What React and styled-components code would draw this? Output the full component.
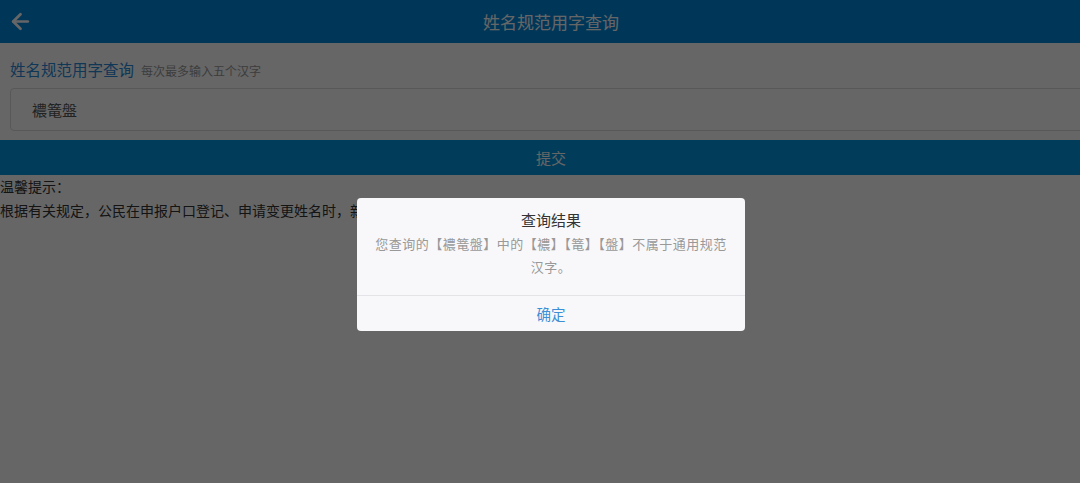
import * as React from "react"
import styled, { createGlobalStyle } from 'styled-components'
import { ArrowLeft } from 'lucide-react'

const GlobalStyle = createGlobalStyle`
html, body{
  margin: 0;
  padding: 0;
  overflow: hidden;
  background: #fff;
}
body{
  font-family: "Noto Sans CJK SC", "Noto Sans", sans-serif;
}
`

// page is a bit wider than the window, as in the screenshot
const Page = styled.div`
position: relative;
width: 1102px;
min-height: 483px;
background-color: #fff;
`

const Header = styled.header`
height: 43px;
display: flex;
align-items: center;
justify-content: center;
position: relative;
background-color: #0089df;
color: #fff;
font-size: 17px;
`

const Back = styled.button`
position: absolute;
left: 8px;
top: 9px;
display: flex;
padding: 0;
border: none;
background: none;
color: #fff;
`

const Form = styled.section`
padding: 15px 0 0;
`

const LabelRow = styled.div`
display: flex;
align-items: baseline;
gap: 7px;
padding-left: 10px;
line-height: 22px;
`

const Label = styled.span`
font-size: 15.5px;
color: #2a8ad8;
`

const Hint = styled.span`
font-size: 12px;
color: #999;
`

const Input = styled.div`
margin: 6px -20px 0 10px;
height: 43px;
box-sizing: border-box;
border: 1px solid #ddd;
border-radius: 4px;
display: flex;
align-items: center;
padding-left: 21px;
font-size: 15px;
color: #555;
`

const Submit = styled.button`
display: block;
width: 100%;
height: 35px;
margin-top: 9px;
border: none;
background-color: #0498e2;
color: #fff;
font-family: inherit;
font-size: 15px;
`

const Tips = styled.div`
font-size: 14px;
line-height: 23.5px;
color: #333;
white-space: nowrap;
`

const Overlay = styled.div`
position: absolute;
inset: 0;
background-color: rgba(0, 0, 0, 0.6);
display: flex;
justify-content: center;
align-items: flex-start;
padding-top: 198px;
box-sizing: border-box;
`

const Dialog = styled.div`
width: 388px;
background-color: #f8f8fa;
border-radius: 4px;
overflow: hidden;
text-align: center;
`

const DialogBody = styled.div`
padding: 12px 16px 17px;
border-bottom: 1px solid #e4e4e8;
`

const DialogTitle = styled.div`
font-size: 15px;
line-height: 20px;
color: #333;
margin-bottom: 2px;
`

const DialogText = styled.div`
font-size: 13px;
line-height: 23px;
letter-spacing: 0.5px;
color: #999;
`

const DialogButton = styled.button`
display: block;
width: 100%;
height: 35px;
border: none;
background: none;
color: #3c8fd6;
font-family: inherit;
font-size: 14.5px;
`

const App = () => {
  const name = '襛篭盤'
  const parts = name.split('').map(c => `【${c}】`).join('')

  return(
    <Page>
      <GlobalStyle/>
      <Header>
        <Back aria-label="返回"><ArrowLeft size={25} strokeWidth={2.6}/></Back>
        姓名规范用字查询
      </Header>
      <Form>
        <LabelRow>
          <Label>姓名规范用字查询</Label>
          <Hint>每次最多输入五个汉字</Hint>
        </LabelRow>
        <Input>{name}</Input>
        <Submit>提交</Submit>
      </Form>
      <Tips>
        <div>温馨提示：</div>
        <div>根据有关规定，公民在申报户口登记、申请变更姓名时，新登记的姓名应当使用规范汉字。</div>
      </Tips>

      <Overlay>
        <Dialog>
          <DialogBody>
            <DialogTitle>查询结果</DialogTitle>
            <DialogText>
              您查询的【{name}】中的{parts}不属于通用规范<br/>汉字。
            </DialogText>
          </DialogBody>
          <DialogButton>确定</DialogButton>
        </Dialog>
      </Overlay>
    </Page>
  )
}

export default App
